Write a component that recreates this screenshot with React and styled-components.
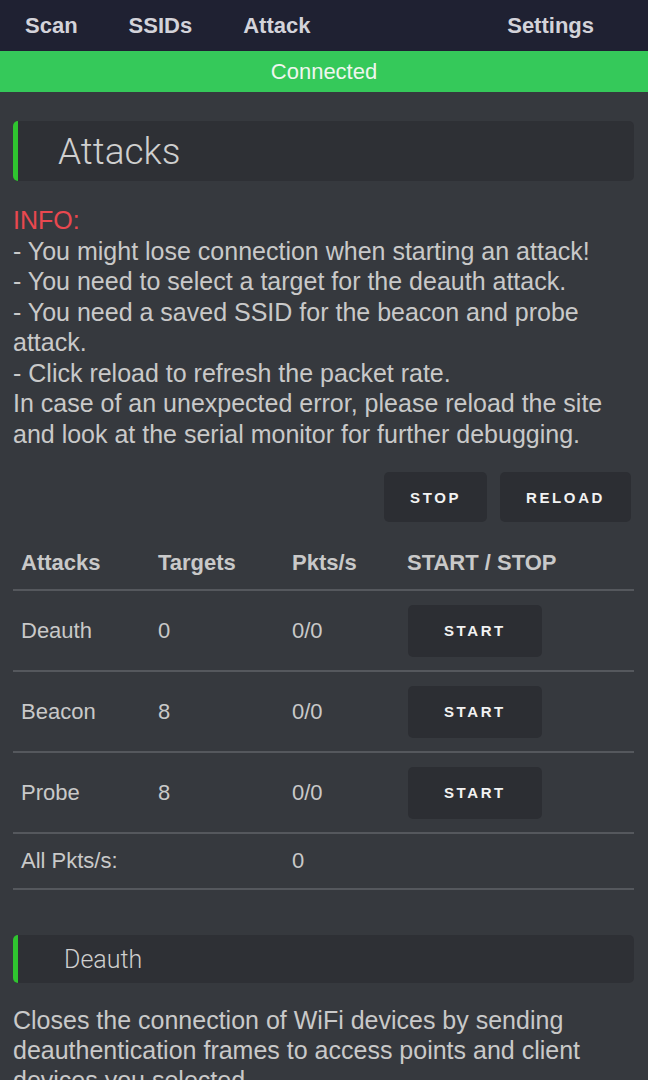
import React from 'react';
import styled, { createGlobalStyle } from 'styled-components';

const GlobalStyle = createGlobalStyle`
  html, body {
    margin: 0;
    padding: 0;
    background: #36393e;
  }
  body {
    font-family: "Liberation Sans", Arial, sans-serif;
    color: #c9c9c9;
  }
`

const Nav = styled.nav`
  display: flex;
  align-items: center;
  height: 51px;
  background: #1f2132;
  padding-right: 28px;
`

const NavLink = styled.a`
  margin-left: ${props => props.$right ? 'auto' : '0'};
  padding: 0 26px 0 25px;
  font-size: 22px;
  font-weight: bold;
  color: #d3d3da;
  text-decoration: none;
`

const Status = styled.div`
  height: 41px;
  line-height: 42px;
  background: #35c95a;
  color: #eef6ee;
  text-align: center;
  font-size: 22px;
`

const Main = styled.main`
  padding: 29px 14px 0 13px;
`

const Panel = styled.div`
  display: flex;
  align-items: center;
  height: ${props => props.$small ? '48px' : '60px'};
  margin-top: ${props => props.$small ? '45px' : '0'};
  background: #2e3035;
  border-radius: 5px;
  border-left: 5px solid #2fc42f;
`

const PanelTitle = styled.h1`
  margin: 0;
  padding-left: ${props => props.$small ? '46px' : '40px'};
  font-family: Roboto, "Liberation Sans", sans-serif;
  font-weight: 300;
  font-size: ${props => props.$small ? '25px' : '37px'};
  color: #cfcfcf;
`

const Info = styled.p`
  margin: 24px 0 0;
  font-size: 25px;
  line-height: 30.5px;
`

const Red = styled.span`
  color: #e9484f;
`

const ButtonBar = styled.div`
  display: flex;
  justify-content: flex-end;
  gap: 13px;
  margin: 23px 3px 0 0;
`

const Button = styled.button`
  height: ${props => props.$tall ? '52px' : '50px'};
  padding: 0 ${props => props.$wide ? '36px' : '26px'};
  border: none;
  border-radius: 5px;
  background: #2c2e33;
  color: #f2f2f2;
  font-family: "Liberation Sans", Arial, sans-serif;
  font-size: 15px;
  font-weight: bold;
  letter-spacing: 2.6px;
`

const Table = styled.table`
  width: 100%;
  margin-top: 14px;
  border-collapse: collapse;
  table-layout: fixed;
`

const HeadCell = styled.th`
  box-sizing: border-box;
  width: ${props => props.$w || 'auto'};
  height: 54px;
  padding: 0 0 0 8px;
  text-align: left;
  font-size: 22px;
  font-weight: bold;
  color: #c9c9c9;
  border-bottom: 2px solid #55585d;
`

const Row = styled.tr`
  border-bottom: 2px solid #55585d;
  height: ${props => props.$short ? '56px' : '81px'};
`

const Cell = styled.td`
  padding: 0 0 0 8px;
  font-size: 22px;
  color: #c9c9c9;
`

const ButtonCell = styled.td`
  padding: 0 0 0 9px;
`

const Description = styled.p`
  margin: 22px 0 0;
  font-size: 25px;
  line-height: 30px;
`

const attacks = [
  { name: 'Deauth', targets: 0, rate: '0/0' },
  { name: 'Beacon', targets: 8, rate: '0/0' },
  { name: 'Probe', targets: 8, rate: '0/0' },
];

const App = () => {
  return (
    <>
      <GlobalStyle />
      <Nav>
        <NavLink href='#'>Scan</NavLink>
        <NavLink href='#'>SSIDs</NavLink>
        <NavLink href='#'>Attack</NavLink>
        <NavLink href='#' $right>Settings</NavLink>
      </Nav>
      <Status>Connected</Status>
      <Main>
        <Panel>
          <PanelTitle>Attacks</PanelTitle>
        </Panel>
        <Info>
          <Red>INFO:</Red><br />
          - You might lose connection when starting an attack!<br />
          - You need to select a target for the deauth attack.<br />
          - You need a saved SSID for the beacon and probe attack.<br />
          - Click reload to refresh the packet rate.<br />
          In case of an unexpected error, please reload the site and look at the serial monitor for further debugging.
        </Info>
        <ButtonBar>
          <Button>STOP</Button>
          <Button>RELOAD</Button>
        </ButtonBar>
        <Table>
          <thead>
            <tr>
              <HeadCell $w='137px'>Attacks</HeadCell>
              <HeadCell $w='134px'>Targets</HeadCell>
              <HeadCell $w='115px'>Pkts/s</HeadCell>
              <HeadCell>START / STOP</HeadCell>
            </tr>
          </thead>
          <tbody>
            {attacks.map(a => (
              <Row key={a.name}>
                <Cell>{a.name}</Cell>
                <Cell>{a.targets}</Cell>
                <Cell>{a.rate}</Cell>
                <ButtonCell><Button $tall $wide>START</Button></ButtonCell>
              </Row>
            ))}
            <Row $short>
              <Cell colSpan={2}>All Pkts/s:</Cell>
              <Cell colSpan={2}>0</Cell>
            </Row>
          </tbody>
        </Table>
        <Panel $small>
          <PanelTitle $small>Deauth</PanelTitle>
        </Panel>
        <Description>
          Closes the connection of WiFi devices by sending deauthentication frames to access points and client devices you selected.
        </Description>
      </Main>
    </>
  );
}

export default App;
